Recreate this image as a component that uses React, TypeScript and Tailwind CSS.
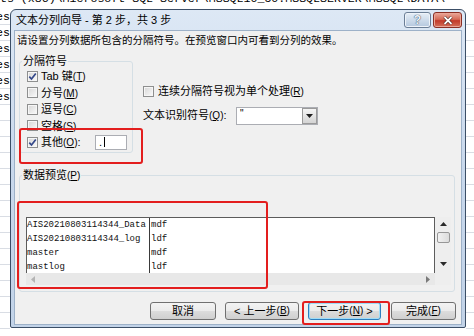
import React from 'react'

const ui = "font-['Liberation_Sans','Noto_Sans_CJK_SC',sans-serif] text-black"
const mono = "font-['Liberation_Mono',monospace]"

const previewRows = [
  { name: 'AIS20210803114344_Data', ext: 'mdf' },
  { name: 'AIS20210803114344_log', ext: 'ldf' },
  { name: 'master', ext: 'mdf' },
  { name: 'mastlog', ext: 'ldf' },
]

const options = [
  { label: 'Tab 键', key: 'T', checked: true },
  { label: '分号', key: 'M', checked: false },
  { label: '逗号', key: 'C', checked: false },
  { label: '空格', key: 'S', checked: false },
]

function Key({ k }: { k: string }) {
  return (
    <span className="text-[10px]">
      (<span className="underline">{k}</span>)
    </span>
  )
}

function Check({ checked }: { checked?: boolean }) {
  return (
    <span className="flex h-[11px] w-[11px] shrink-0 items-center justify-center border border-[#8e8f8f] bg-linear-to-br from-[#d6d6d6] to-[#fbfbfb] shadow-[inset_0_0_0_1px_#f6f6f6]">
      {checked && (
        <svg width="9" height="9" viewBox="0 0 9 9">
          <path d="M1.3 4.6 L3.5 7 L7.8 1.4" fill="none" stroke="#34488a" strokeWidth="1.7" />
        </svg>
      )}
    </span>
  )
}

function Tri({ dir, color = '#1e1e1e' }: { dir: 'up' | 'down' | 'left' | 'right'; color?: string }) {
  const d = {
    up: 'M0 4 L3.5 0 L7 4 Z',
    down: 'M0 0 L7 0 L3.5 4 Z',
    left: 'M4 0 L4 7 L0 3.5 Z',
    right: 'M0 0 L4 3.5 L0 7 Z',
  }[dir]
  const vertical = dir === 'up' || dir === 'down'
  return (
    <svg width={vertical ? 7 : 4} height={vertical ? 4 : 7} viewBox={vertical ? '0 0 7 4' : '0 0 4 7'}>
      <path d={d} fill={color} />
    </svg>
  )
}

function SheetColumn({ width, rows, text }: { width: string; rows: number; text?: number }) {
  return (
    <div className={`${width} flex shrink-0 flex-col overflow-hidden`}>
      {Array.from({ length: rows }).map((_, i) => (
        <div
          key={i}
          className={`flex h-[16px] shrink-0 items-center justify-end overflow-hidden whitespace-nowrap border-b border-[#d9dde4] ${mono} text-[11.6px] leading-[16px]`}
        >
          {text !== undefined && i < text ? 'es' : ''}
        </div>
      ))}
    </div>
  )
}

const btn =
  'flex h-[18px] items-center justify-center rounded-[3px] border bg-[linear-gradient(#f3f3f3,#ebebeb_48%,#dcdcdc_52%,#cfcfcf)] text-[11px] leading-[14px]'

export default function App() {
  return (
    <div className={`relative h-[336px] w-[474px] overflow-hidden bg-white ${ui}`}>
      {/* sheet path line, cut by the dialog */}
      <div className="h-[9px] overflow-hidden">
        <div className={`-mt-[9px] whitespace-nowrap ${mono} text-[11.6px] leading-[16px]`}>
          ts (x86)\Microsoft SQL Server\MSSQL10_50.MSSQLSERVER\MSSQL\DATA\
        </div>
      </div>

      <div className="flex">
        <SheetColumn width="w-[10px]" rows={21} text={6} />

        {/* dialog */}
        <div className="flex h-[319px] w-[456px] shrink-0 flex-col rounded-t-[6px] rounded-b-[2px] border border-[#3b4e66] bg-linear-to-b from-[#dde8f5] via-[#c8d8ec] to-[#c2d3e8] px-[3px] pb-[2px]">
          {/* title bar */}
          <div className="flex h-[20px] items-start pl-[2px] pt-[2px]">
            <span className="mt-[1px] text-[11px] leading-[14px]">文本分列向导 - 第 2 步，共 3 步</span>
            <div className="ml-auto flex gap-[2px]">
              <div className="flex h-[16px] w-[27px] items-center justify-center rounded-[3px] border border-[#6b7e96] bg-linear-to-b from-[#e6eef7] to-[#b5c8de] shadow-[inset_0_0_0_1px_#eef3f9]">
                <span className="text-[12px] font-bold leading-[12px] text-[#eef2f7] [text-shadow:0_0_1px_#3b4f68,0_0_1px_#3b4f68]">?</span>
              </div>
              <div className="flex h-[16px] w-[29px] items-center justify-center rounded-[3px] border border-[#8a2f25] bg-[linear-gradient(#e9a89a,#d66c58_45%,#c23a2a_55%,#d3705a)] shadow-[inset_0_0_0_1px_#eaa596]">
                <svg width="10" height="9" viewBox="0 0 10 9">
                  <path d="M1.5 1 L8.5 8 M8.5 1 L1.5 8" stroke="#3a1510" strokeWidth="3" />
                  <path d="M1.5 1 L8.5 8 M8.5 1 L1.5 8" stroke="#ffffff" strokeWidth="1.8" />
                </svg>
              </div>
            </div>
          </div>

          {/* client area */}
          <div className="flex flex-1 flex-col border border-[#9db1c8] bg-[#f0f0f0]">
            <p className="ml-[2px] mt-[3px] h-[13px] text-[10.5px] leading-[13px]">
              请设置分列数据所包含的分隔符号。在预览窗口内可看到分列的效果。
            </p>

            <div className="ml-[4px] mt-[8px] flex items-start">
              <fieldset className="h-[98px] w-[114px] shrink-0 rounded-[3px] border border-[#d5dfe5]">
                <legend className="ml-[2px] px-[1px] text-[11px] leading-[13px]">分隔符号</legend>
                <div className="flex flex-col pl-[7px]">
                  {options.map((o) => (
                    <div key={o.key} className="flex h-[16.5px] items-center gap-[3px] text-[11px]">
                      <Check checked={o.checked} />
                      <span>
                        {o.label}
                        <Key k={o.key} />
                      </span>
                    </div>
                  ))}
                  <div className="flex h-[16.5px] items-center gap-[3px] text-[11px]">
                    <Check checked />
                    <span className="w-[51px]">
                      其他
                      <Key k="O" />:
                    </span>
                    <div className="flex h-[15px] w-[32px] items-center border border-[#abadb3] bg-white pl-[3px] text-[11px]">
                      <span className="leading-[10px]">.</span>
                      <span className="ml-[2px] h-[10px] w-px bg-black" />
                    </div>
                  </div>
                </div>
              </fieldset>

              <div className="ml-[10px] mt-[28.5px] flex flex-col text-[11px]">
                <div className="flex h-[16px] items-center gap-[4px]">
                  <Check />
                  <span>
                    连续分隔符号视为单个处理
                    <Key k="R" />
                  </span>
                </div>
                <div className="mt-[7px] flex h-[18px] items-center">
                  <span className="w-[93px]">
                    文本识别符号
                    <Key k="Q" />:
                  </span>
                  <div className="flex h-[18px] w-[82px] border border-[#abadb3] bg-white">
                    <span className="flex-1 pl-[3px] pt-[1px] text-[10px] leading-[10px] text-black">"</span>
                    <span className="flex w-[15px] items-center justify-center border border-[#9a9a9a] bg-linear-to-b from-[#f5f5f5] to-[#d4d4d4]">
                      <Tri dir="down" />
                    </span>
                  </div>
                </div>
              </div>
            </div>

            <fieldset className="ml-[4px] mt-[15.5px] h-[123px] w-[436px] rounded-[3px] border border-[#d5dfe5]">
              <legend className="ml-[2px] px-[1px] text-[11px] leading-[13px]">
                数据预览
                <Key k="P" />
              </legend>
              <div className="ml-[6px] mt-[35.5px] grid w-[425px] grid-cols-[409px_16px] grid-rows-[56px_12px]">
                <div className={`flex overflow-hidden border-x border-t border-[#5c5c5c] bg-white ${mono} text-[9px] leading-[14px] text-[#111]`}>
                  <div className="w-[123px] shrink-0 border-r border-[#3a3a3a]">
                    {previewRows.map((r) => (
                      <div key={r.name} className="h-[14px] whitespace-nowrap">
                        {r.name}
                      </div>
                    ))}
                  </div>
                  <div className="pl-[1px]">
                    {previewRows.map((r) => (
                      <div key={r.name} className="h-[14px]">
                        {r.ext}
                      </div>
                    ))}
                  </div>
                </div>
                <div className="flex flex-col items-center bg-[#eeeeee]">
                  <div className="mt-[5px]">
                    <Tri dir="up" color="#2a2a2a" />
                  </div>
                  <div className="mt-[6px] h-[11px] w-[13px] rounded-[2px] border border-[#979797] bg-linear-to-r from-[#f1f1f1] to-[#dcdcdc]" />
                  <div className="mt-[19px]">
                    <Tri dir="down" color="#2a2a2a" />
                  </div>
                </div>
                <div className="flex items-center justify-between bg-[#e8e8e8] px-[5px]">
                  <Tri dir="left" color="#b4b4b4" />
                  <Tri dir="right" color="#7a7a7a" />
                </div>
                <div className="bg-[#eeeeee]" />
              </div>
            </fieldset>

            <div className="mb-[4px] mr-[5px] mt-auto flex justify-end">
              <div className={`${btn} w-[66px] border-[#707070]`}>取消</div>
              <div className={`${btn} ml-[9px] w-[74px] border-[#707070]`}>
                &lt; 上一步
                <Key k="B" />
              </div>
              <div className={`${btn} ml-[9px] w-[73px] border-[#2c7fc0] shadow-[inset_0_0_0_1px_#9edcf8]`}>
                下一步
                <Key k="N" />
                &nbsp;&gt;
              </div>
              <div className={`${btn} ml-[10px] w-[65px] border-[#707070]`}>
                完成
                <Key k="F" />
              </div>
            </div>
          </div>
        </div>

        <SheetColumn width="w-[8px]" rows={21} />
      </div>

      {/* red annotation frames */}
      <div className="absolute left-[19px] top-[128px] h-[36px] w-[124px] rounded-[3px] border-2 border-[#e31e1e]" />
      <div className="absolute left-[17px] top-[201px] h-[88px] w-[251px] rounded-[3px] border-2 border-[#e31e1e]" />
      <div className="absolute left-[302px] top-[301px] h-[24px] w-[88px] rounded-[3px] border-2 border-[#e31e1e]" />
    </div>
  )
}
